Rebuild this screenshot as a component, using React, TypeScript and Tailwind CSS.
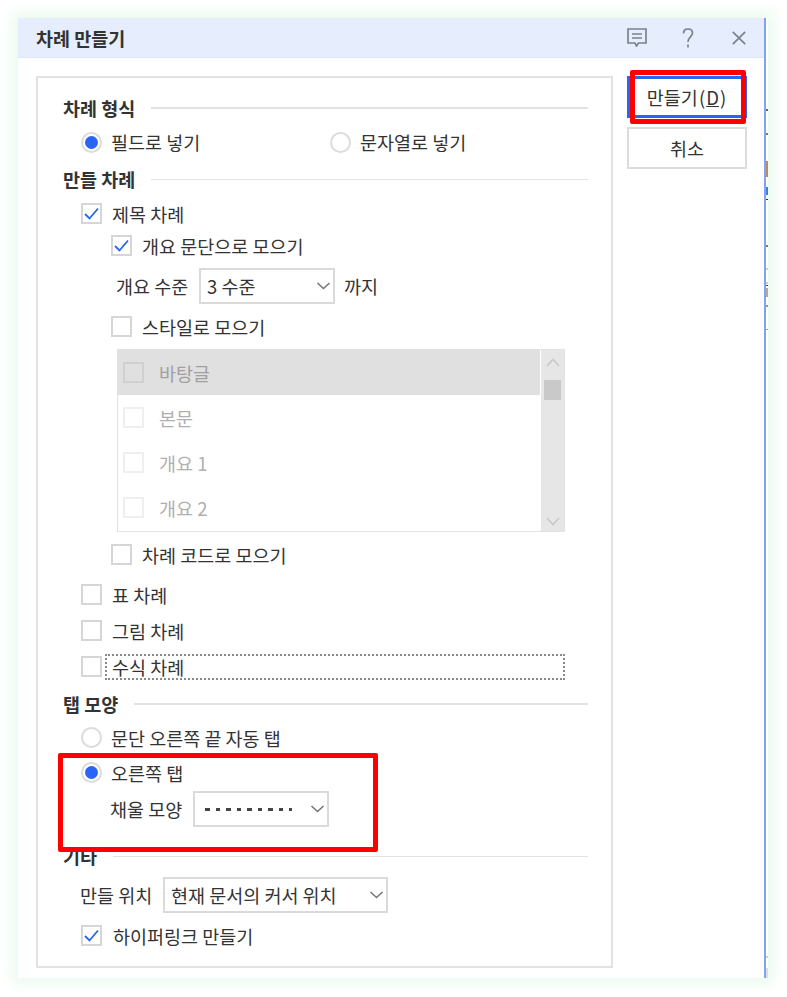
import React from "react";

const FONT = "font-['Noto_Sans_CJK_KR','Noto_Sans',sans-serif]";

function Check() {
  return (
    <svg width="15" height="13" viewBox="0 0 15 13" fill="none">
      <path d="M1 7 L5.5 11.5 L14 1.5" stroke="#2a64f0" strokeWidth="1.8" />
    </svg>
  );
}

function Box({ checked, muted, selected }: { checked?: boolean; muted?: boolean; selected?: boolean }) {
  const border = selected ? "border-[#d0d0d0]" : muted ? "border-[#efefef]" : "border-[#d6d6d6]";
  return (
    <span className={`flex h-[21px] w-[21px] shrink-0 items-center justify-center border-2 ${border}`}>
      {checked ? <Check /> : null}
    </span>
  );
}

function Radio({ on }: { on?: boolean }) {
  return (
    <span className="flex h-[21px] w-[21px] shrink-0 items-center justify-center rounded-full border-2 border-[#dcdcdc] bg-white">
      {on ? <span className="h-[13px] w-[13px] rounded-full bg-[#2a64f5]" /> : null}
    </span>
  );
}

function Heading({ text, thick, mt }: { text: string; thick?: boolean; mt: string }) {
  return (
    <div className={`flex h-[22px] items-center ${mt} mb-[2px] mr-[23px]`}>
      <span className="mr-[16px] whitespace-nowrap text-[18.5px] font-bold leading-[22px] text-[#333333]">{text}</span>
      <span className={`flex-1 bg-[#e2e2e2] ${thick ? "h-[2px]" : "h-px"}`} />
    </div>
  );
}

function Chevron() {
  return (
    <svg width="15" height="8" viewBox="0 0 15 8" fill="none">
      <path d="M1.5 1 L7.5 6.5 L13.5 1" stroke="#777777" strokeWidth="1.6" />
    </svg>
  );
}

function Select({ width, children }: { width: string; children: React.ReactNode }) {
  return (
    <div className={`flex h-[36px] ${width} shrink-0 items-center justify-between border-2 border-[#dadada] bg-white pl-[6px] pr-[2px] text-[#333333]`}>
      <span className="whitespace-nowrap">{children}</span>
      <Chevron />
    </div>
  );
}

function ListRow({ label, selected }: { label: string; selected?: boolean }) {
  return (
    <div className={`flex h-[45px] items-center gap-[15px] pl-[5px] ${selected ? "bg-[#e0e0e0]" : ""}`}>
      <Box muted selected={selected} />
      <span className={selected ? "text-[#a0a0a0]" : "text-[#b0b0b0]"}>{label}</span>
    </div>
  );
}

const marks: [string, string, string][] = [
  ["top-[91px]", "h-[2px]", "bg-[#666666]"],
  ["top-[115px]", "h-[2px]", "bg-[#777777]"],
  ["top-[143px]", "h-[16px]", "bg-[#c08a5a]"],
  ["top-[169px]", "h-[8px]", "bg-[#3b82e0]"],
  ["top-[181px]", "h-px", "bg-[#333333]"],
  ["top-[227px]", "h-[2px]", "bg-[#777777]"],
  ["top-[250px]", "h-[2px]", "bg-[#cccccc]"],
  ["top-[264px]", "h-[2px]", "bg-[#cccccc]"],
  ["top-[267px]", "h-px", "bg-[#444444]"],
  ["top-[270px]", "h-[9px]", "bg-[#b8a894]"],
  ["top-[287px]", "h-[2px]", "bg-[#999999]"],
  ["top-[311px]", "h-px", "bg-[#999999]"],
  ["top-[938px]", "h-[2px]", "bg-[#cccccc]"],
  ["top-[950px]", "h-[10px]", "bg-[#dddddd]"],
];

export default function App() {
  return (
    <div className={`h-[997px] w-[787px] overflow-hidden bg-white pl-[18px] pt-[18px] ${FONT}`}>
      <div className="relative flex h-[960px] w-[750px] bg-white text-[18.5px] leading-[24px] text-[#333333] shadow-[0_0_14px_6px_#eafaef]">
        {/* dialog */}
        <div className="h-full w-[748px] shrink-0 border-r-2 border-[#7ea3f7]">
          {/* title bar */}
          <div className="flex h-[40px] items-center justify-between border-b border-[#dde7fb] bg-[#e6eefd] pl-[18px] pr-[18px]">
            <span className="text-[18.5px] font-bold text-[#333333]">차례 만들기</span>
            <div className="flex items-center">
              <svg className="mr-[34px]" width="20" height="19" viewBox="0 0 20 19" fill="none" stroke="#7d828a" strokeWidth="1.7">
                <path d="M1 1 H19 V15 H11.5 L9.5 18 L8 15 H1 Z" />
                <path d="M5 6 H15 M5 10 H15" strokeWidth="1.5" />
              </svg>
              <svg className="mr-[37px]" width="14" height="20" viewBox="0 0 14 20" fill="none" stroke="#7d828a" strokeWidth="1.7">
                <path d="M2.5 5.5 C2.5 2.5 4.5 1 7 1 C10 1 11.5 3 11.5 5 C11.5 9 7 9 7 14" />
                <path d="M7 16.5 V19.5" />
              </svg>
              <svg width="14" height="14" viewBox="0 0 14 14" fill="none" stroke="#7d828a" strokeWidth="1.7">
                <path d="M0.8 0.8 L13.2 13.2 M13.2 0.8 L0.8 13.2" />
              </svg>
            </div>
          </div>

          {/* body */}
          <div className="flex items-start pl-[18px] pt-[18px]">
            {/* main panel */}
            <div className="flex h-[892px] w-[577px] shrink-0 flex-col border-2 border-[#e2e2e2] pl-[25px]">
              <Heading text="차례 형식" thick mt="mt-[19px]" />
              <div className="mt-[9px] flex h-[24px] items-center pl-[18px]">
                <Radio on />
                <span className="ml-[9px] w-[219px]">필드로 넣기</span>
                <Radio />
                <span className="ml-[9px]">문자열로 넣기</span>
              </div>
              <Heading text="만들 차례" mt="mt-[14px]" />
              <div className="mt-[11px] flex h-[21px] items-center gap-[10px] pl-[18px]">
                <Box checked />
                <span>제목 차례</span>
              </div>
              <div className="mt-[11px] flex h-[21px] items-center gap-[10px] pl-[48px]">
                <Box checked />
                <span>개요 문단으로 모으기</span>
              </div>
              <div className="mt-[12px] flex h-[36px] items-center pl-[53px]">
                <span className="w-[83px] whitespace-nowrap">개요 수준</span>
                <Select width="w-[136px]">3 수준</Select>
                <span className="ml-[9px]">까지</span>
              </div>
              <div className="mt-[12px] flex h-[21px] items-center gap-[10px] pl-[48px]">
                <Box />
                <span>스타일로 모으기</span>
              </div>
              {/* list */}
              <div className="ml-[54px] mt-[12px] flex h-[183px] w-[448px] border border-[#e2e2e2]">
                <div className="flex-1 overflow-hidden">
                  <ListRow label="바탕글" selected />
                  <ListRow label="본문" />
                  <ListRow label="개요 1" />
                  <ListRow label="개요 2" />
                </div>
                <div className="ml-[1px] flex w-[23px] flex-col items-center bg-[#e6e6e6]">
                  <svg className="mt-[8px]" width="14" height="9" viewBox="0 0 14 9" fill="none">
                    <path d="M1 8 L7 1.5 L13 8" stroke="#c8c8c8" strokeWidth="1.6" />
                  </svg>
                  <span className="mt-[13px] h-[20px] w-[17px] bg-[#c9c9c9]" />
                  <svg className="mt-[117px]" width="14" height="9" viewBox="0 0 14 9" fill="none">
                    <path d="M1 1 L7 7.5 L13 1" stroke="#c8c8c8" strokeWidth="1.6" />
                  </svg>
                </div>
              </div>
              <div className="mt-[12px] flex h-[21px] items-center gap-[10px] pl-[48px]">
                <Box />
                <span>차례 코드로 모으기</span>
              </div>
              <div className="mt-[19px] flex h-[21px] items-center gap-[10px] pl-[18px]">
                <Box />
                <span>표 차례</span>
              </div>
              <div className="mt-[15px] flex h-[21px] items-center gap-[10px] pl-[18px]">
                <Box />
                <span>그림 차례</span>
              </div>
              <div className="mt-[15px] flex h-[21px] items-center pl-[18px]">
                <Box />
                <span className="ml-[3px] flex h-[26px] w-[460px] items-center border-2 border-dotted border-[#8a8a8a] pl-[5px]">수식 차례</span>
              </div>
              <Heading text="탭 모양" thick mt="mt-[16px]" />
              <div className="mt-[10px] flex h-[21px] items-center gap-[9px] pl-[18px]">
                <Radio />
                <span>문단 오른쪽 끝 자동 탭</span>
              </div>
              <div className="mt-[14px] flex h-[21px] items-center gap-[9px] pl-[18px]">
                <Radio on />
                <span>오른쪽 탭</span>
              </div>
              <div className="mt-[8px] flex h-[36px] items-center pl-[47px]">
                <span className="w-[83px] whitespace-nowrap">채울 모양</span>
                <Select width="w-[136px]">
                  <span className="flex items-center gap-[6px] pl-[4px]">
                    {[0, 1, 2, 3, 4, 5, 6, 7].map((i) => (
                      <span key={i} className="h-[3px] w-[4.5px] bg-[#444444]" />
                    ))}
                    <span className="h-[3px] w-[3px] bg-[#444444]" />
                  </span>
                </Select>
              </div>
              <Heading text="기타" mt="mt-[18px]" />
              <div className="mt-[8px] flex h-[36px] items-center pl-[17px]">
                <span className="w-[83px] whitespace-nowrap">만들 위치</span>
                <Select width="w-[225px]">현재 문서의 커서 위치</Select>
              </div>
              <div className="mt-[12px] flex h-[21px] items-center gap-[11px] pl-[18px]">
                <Box checked />
                <span>하이퍼링크 만들기</span>
              </div>
            </div>

            {/* buttons */}
            <div className="ml-[14px] flex w-[120px] flex-col gap-[9px]">
              <div className="flex h-[42px] items-center justify-center border-x-[4px] border-y-[3px] border-[#2a64f5] bg-white">
                <span className="whitespace-nowrap">
                  만들기<span className="mx-[1px]">(</span>
                  <span className="underline">D</span>
                  <span className="mx-[1px]">)</span>
                </span>
              </div>
              <div className="flex h-[42px] items-center justify-center border-2 border-[#dcdcdc] bg-white">취소</div>
            </div>
          </div>
        </div>

        {/* sliver of the document behind */}
        <div className="relative h-full w-[2px] shrink-0 bg-white">
          {marks.map(([top, h, c]) => (
            <span key={top} className={`absolute left-0 w-[2px] ${top} ${h} ${c}`} />
          ))}
        </div>

        {/* red annotations */}
        <div className="absolute left-[612px] top-[52px] h-[54px] w-[116px] rounded-[2px] border-[5px] border-[#ff0000]" />
        <div className="absolute left-[40px] top-[735px] h-[99px] w-[320px] rounded-[2px] border-[5px] border-[#ff0000]" />
      </div>
    </div>
  );
}
